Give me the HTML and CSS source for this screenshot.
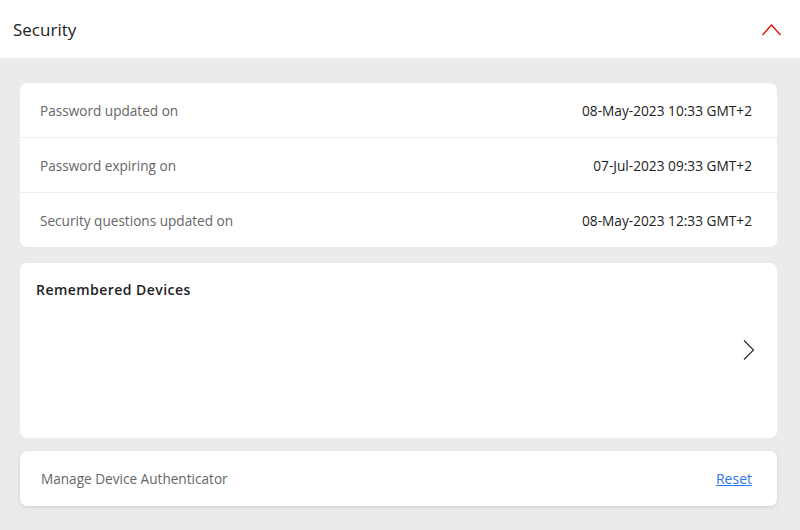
FILE: index.html
```html
<!DOCTYPE html>
<html>
<head>
<meta charset="utf-8">
<link rel="stylesheet" href="styles.css">
</head>
<body>
<header class="header">
  <h1 class="header-title">Security</h1>
  <svg class="chev-up" width="22" height="14" viewBox="0 0 22 14"><polyline points="1.5,12 10.5,2 19.5,12" fill="none" stroke="#e60000" stroke-width="1.2"/></svg>
</header>
<main class="content">
  <section class="card info-card">
    <div class="row"><span class="label">Password updated on</span><span class="value">08-May-2023 10:33 GMT+2</span></div>
    <div class="row"><span class="label">Password expiring on</span><span class="value">07-Jul-2023 09:33 GMT+2</span></div>
    <div class="row"><span class="label">Security questions updated on</span><span class="value">08-May-2023 12:33 GMT+2</span></div>
  </section>
  <section class="card devices-card">
    <h2 class="devices-title">Remembered Devices</h2>
    <div class="devices-body">
      <svg class="chev-right" width="14" height="22" viewBox="0 0 14 22"><polyline points="2,1.5 11.5,11 2,20.5" fill="none" stroke="#333" stroke-width="1.3"/></svg>
    </div>
  </section>
  <section class="card auth-card">
    <span class="label">Manage Device Authenticator</span>
    <a class="reset" href="#">Reset</a>
  </section>
</main>
</body>
</html>
```
FILE: styles.css
```css
* { box-sizing: border-box; }
html, body { margin: 0; padding: 0; }
body {
  width: 800px;
  height: 530px;
  background: #ebebeb;
  font-family: "Open Sans", "Noto Sans", sans-serif;
  overflow: hidden;
}
.header {
  height: 58px;
  background: #fff;
  display: flex;
  align-items: center;
  justify-content: space-between;
  padding: 0 17px 0 13px;
}
.header-title {
  margin: 0;
  font-size: 17px;
  font-weight: 400;
  color: #222;
}
.chev-up { display: block; margin-top: 2px; }
.content {
  padding: 25px 23px 0 20px;
}
.card {
  background: #fff;
  border-radius: 7px;
}
.info-card { margin-bottom: 16px; }
.row {
  height: 55px;
  display: flex;
  align-items: center;
  justify-content: space-between;
  padding: 0 25px 0 20px;
  border-top: 1px solid #ededed;
}
.row:first-child { border-top: none; height: 54px; }
.label {
  font-size: 13.6px;
  color: #666;
}
.value {
  font-size: 13.7px;
  color: #222;
}
.devices-card {
  height: 175px;
  padding: 17px 21px 0 16px;
  margin-bottom: 13px;
  display: flex;
  flex-direction: column;
}
.devices-title {
  margin: 0;
  font-size: 14px;
  font-weight: 600;
  letter-spacing: 0.45px;
  color: #222;
}
.devices-body {
  flex: 1;
  display: flex;
  align-items: center;
  justify-content: flex-end;
  padding-bottom: 38px;
}
.chev-right { display: block; }
.auth-card {
  height: 55px;
  display: flex;
  align-items: center;
  justify-content: space-between;
  padding: 0 25px 0 21px;
  box-shadow: 0 1px 4px rgba(0,0,0,0.12);
}
.reset {
  font-size: 14px;
  color: #2f76ec;
  text-decoration: underline;
}
```
